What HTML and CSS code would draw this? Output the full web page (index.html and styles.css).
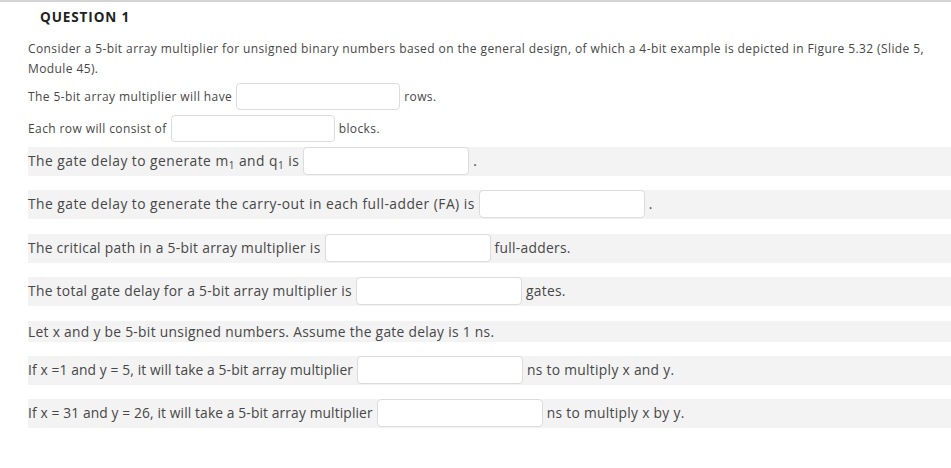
FILE: index.html
```html
<!DOCTYPE html>
<html>
<head>
<meta charset="utf-8">
<link rel="stylesheet" href="styles.css">
</head>
<body>
<div class="page">
  <h2 class="qtitle">QUESTION 1</h2>
  <div class="content">
    <p class="intro">Consider a 5-bit array multiplier for unsigned binary numbers based on the general design, of which a 4-bit example is depicted in Figure 5.32 (Slide 5, Module 45).</p>
    <div class="line"><span>The 5-bit array multiplier will have</span><span class="box"></span><span>rows.</span></div>
    <div class="line"><span>Each row will consist of</span><span class="box"></span><span>blocks.</span></div>
    <div class="band band-first"><span class="wide">The gate delay to generate m<sub>1</sub> and q<sub>1</sub> is</span><span class="box"></span><span>.</span></div>
    <div class="band"><span class="wide">The gate delay to generate the carry-out in each full-adder (FA) is</span><span class="box"></span><span>.</span></div>
    <div class="band"><span>The critical path in a 5-bit array multiplier is</span><span class="box"></span><span>full-adders.</span></div>
    <div class="band"><span>The total gate delay for a 5-bit array multiplier is</span><span class="box"></span><span>gates.</span></div>
    <div class="band plain"><span>Let x and y be 5-bit unsigned numbers. Assume the gate delay is 1 ns.</span></div>
    <div class="band"><span class="narrow">If x =1 and y = 5, it will take a 5-bit array multiplier</span><span class="box"></span><span>ns to multiply x and y.</span></div>
    <div class="band"><span class="narrow">If x = 31 and y = 26, it will take a 5-bit array multiplier</span><span class="box"></span><span>ns to multiply x by y.</span></div>
  </div>
</div>
</body>
</html>
```

FILE: styles.css
```css
html, body {
  margin: 0;
  padding: 0;
  background: #fff;
}
body {
  font-family: "Open Sans", Lato, sans-serif;
  color: #474747;
}
.page {
  border-top: 2px solid #d4d4d4;
}
.qtitle {
  margin: 0;
  padding: 6px 0 0 40px;
  font-size: 13.5px;
  font-weight: 700;
  letter-spacing: 0.9px;
  color: #222;
  height: 23px;
  line-height: 18px;
}
.content {
  padding-left: 28px;
  display: flex;
  flex-direction: column;
}
.intro {
  margin: 8px 0 0 0;
  font-size: 12px;
  letter-spacing: 0.4px;
  line-height: 20px;
  padding-right: 6px;
}
.line {
  display: flex;
  align-items: center;
  gap: 4px;
  font-size: 12px;
  letter-spacing: 0.4px;
  height: 27px;
  margin-top: 5px;
}
.line:nth-of-type(1) { margin-top: 4px; }
.line .box {
  width: 164px;
  height: 27px;
}
.box {
  display: inline-block;
  background: #fff;
  border: 1px solid #dcdcdc;
  border-radius: 4px;
  width: 166px;
  height: 28px;
  box-sizing: border-box;
}
.band {
  display: flex;
  align-items: flex-start;
  gap: 4px;
  background: #f3f3f3;
  height: 29px;
  margin-top: 14.4px;
  font-size: 13.8px;
  letter-spacing: 0.3px;
}
.band > span:not(.box) {
  line-height: 28px;
}
.band > span.wide { letter-spacing: 0.48px; }
.band > span.narrow { letter-spacing: 0.12px; }
.band.band-first { margin-top: 5px; }
.band.plain {
  height: 21px;
}
.band.plain > span { line-height: 21px; }
sub {
  font-size: 10px;
  line-height: 0;
  vertical-align: -3px;
}
```
